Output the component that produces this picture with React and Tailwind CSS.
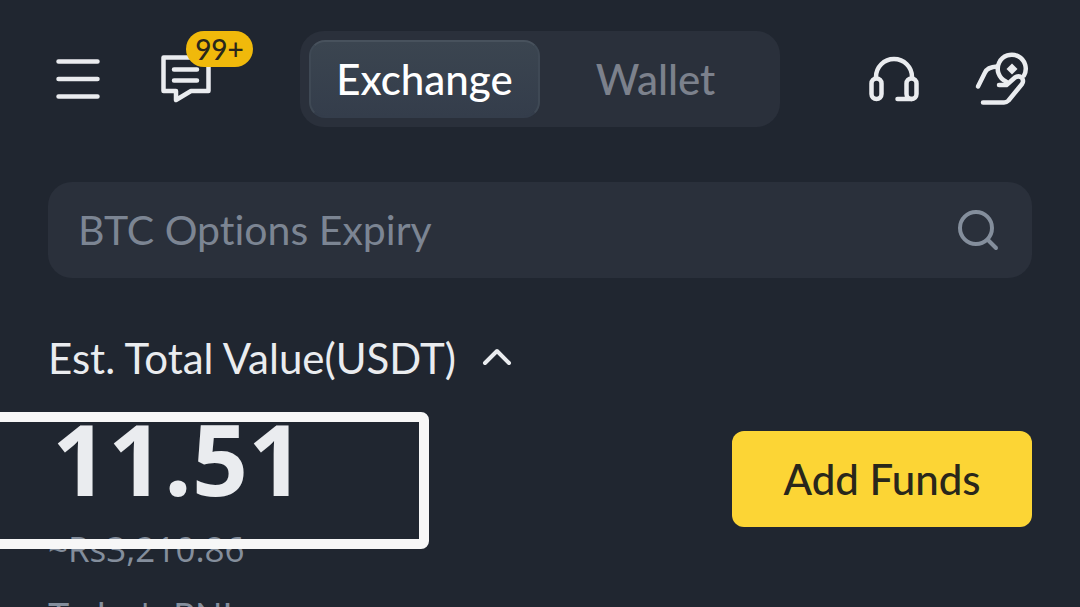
import React, { useState } from "react";

const MenuIcon = () => (
  <svg viewBox="0 0 48 48" className="size-12" fill="none" stroke="currentColor" strokeWidth="4.500" strokeLinecap="round">
    <path d="M6.500 6.500H45.500M6.500 24H45.500M6.500 41.500H45.500" />
  </svg>
);

const ChatIcon = () => (
  <svg viewBox="0 0 56 56" className="size-14" fill="none" stroke="currentColor" strokeWidth="4.500" strokeLinecap="round" strokeLinejoin="round">
    <path d="M5.500 6.500H50.500V40H33L18 49V40H5.500Z" />
    <path d="M16 18.500H39M16 29.500H39" />
  </svg>
);

const HeadsetIcon = () => (
  <svg viewBox="0 0 56 56" className="size-14" fill="none" stroke="currentColor" strokeWidth="4.500" strokeLinecap="round" strokeLinejoin="round">
    <path d="M10 27V26C10 16 18 8 28 8S46 16 46 26V27" />
    <rect x="5.500" y="27.500" width="10" height="20.500" rx="5" />
    <rect x="40.500" y="27.500" width="10" height="20.500" rx="5" />
    <path d="M46 48H31.500" />
  </svg>
);

const HandCoinIcon = () => (
  <svg viewBox="0 0 56 56" className="size-14" fill="none" stroke="currentColor" strokeWidth="4.500" strokeLinecap="round" strokeLinejoin="round">
    <path d="M4 35.500L11 21.500Q13.500 16 23 15.500" />
    <path d="M32 30.500A14 14 0 1 1 50 24.500" />
    <path d="M25 34H32.500L41 26.500Q45 24 48 27Q50 30 48 33L34.500 49.500Q32.500 51.500 30 51.500H9" />
    <path d="M38 12.500L43.500 18L38 23.500L32.500 18Z" fill="currentColor" stroke="none" />
  </svg>
);

const SearchIcon = () => (
  <svg viewBox="0 0 48 48" className="size-12 shrink-0" fill="none" stroke="currentColor" strokeWidth="4" strokeLinecap="round">
    <circle cx="22" cy="22" r="16" />
    <path d="M34 34L42 42" />
  </svg>
);

const App = () => {
  const [tab, setTab] = useState("exchange");
  const [open, setOpen] = useState(true);

  const active =
    "bg-linear-to-b from-[#3b4550] to-[#343d4b] border-x-[#3f4955] border-t-[#48525d] border-b-[#343d4b] text-white";
  const inactive = "border-transparent text-[#7c818c]";

  return (
    <div className="h-screen overflow-hidden bg-[#202630] px-12 pt-[31px] font-['Lato',sans-serif] text-[42px] leading-12 text-[#eaecef]">
      {/* TOP BAR */}
      <header className="grid h-24 grid-cols-[1fr_auto_1fr] items-center">
        <div className="flex items-center gap-[58px] pl-1">
          <button aria-label="Menu">
            <MenuIcon />
          </button>
          <button aria-label="Messages" className="relative">
            <ChatIcon />
            <span className="absolute -top-5 left-7 flex h-9 w-[67px] items-center justify-center rounded-full bg-[#f0b90b] text-[28px] font-medium text-[#29271b]">
              99+
            </span>
          </button>
        </div>

        <div role="tablist" className="flex h-24 w-[480px] rounded-3xl bg-[#2a303b] p-[9px] font-medium">
          <button
            role="tab"
            aria-selected={tab === "exchange"}
            onClick={() => setTab("exchange")}
            className={`flex-1 rounded-2xl border-2 ${tab === "exchange" ? active : inactive}`}
          >
            Exchange
          </button>
          <button
            role="tab"
            aria-selected={tab === "wallet"}
            onClick={() => setTab("wallet")}
            className={`flex-1 rounded-2xl border-2 ${tab === "wallet" ? active : inactive}`}
          >
            Wallet
          </button>
        </div>

        <div className="flex items-center justify-end gap-13 pr-0.5">
          <button aria-label="Support">
            <HeadsetIcon />
          </button>
          <button aria-label="Rewards">
            <HandCoinIcon />
          </button>
        </div>
      </header>

      {/* SEARCH */}
      <label className="mt-[55px] flex h-24 items-center rounded-3xl bg-[#2a303b] px-[30px] text-[#848e9c]">
        <input
          type="text"
          aria-label="Search"
          placeholder="BTC Options Expiry"
          className="min-w-0 flex-1 bg-transparent text-[41px] placeholder-[#7c8593] outline-none [font-variant-ligatures:none]"
        />
        <SearchIcon />
      </label>

      {/* BALANCE */}
      <main className="mt-14">
        <button
          aria-expanded={open}
          onClick={() => setOpen(!open)}
          className="flex items-center gap-[26px]"
        >
          Est. Total Value(USDT)
          <svg viewBox="0 0 30 20" className="h-5 w-[30px]" fill="none" stroke="currentColor" strokeWidth="4" strokeLinecap="round" strokeLinejoin="round">
            <path d="M3 15L15 3L27 15" />
          </svg>
        </button>

        <div className="mt-[33px] flex items-start justify-between">
          <div className="relative font-['Open_Sans',sans-serif]">
            <p className="pl-1 text-[98px] leading-[86px] font-bold">11.51</p>
            <p className="mt-6 text-[35px] text-[#848e9c]">~Rs3,210.86</p>
            {/* highlight frame */}
            <div className="absolute -top-[3px] -left-16 h-[137px] w-[445px] rounded-lg border-10 border-[#f7f7f7]" />
          </div>
          <button className="mt-4 h-24 w-[300px] rounded-xl bg-[#fcd535] font-medium text-[#29271b]">
            Add Funds
          </button>
        </div>
        <p className="mt-[18px] text-[36px] text-[#848e9c]">Today's PNL</p>
      </main>
    </div>
  );
};

export default App;
